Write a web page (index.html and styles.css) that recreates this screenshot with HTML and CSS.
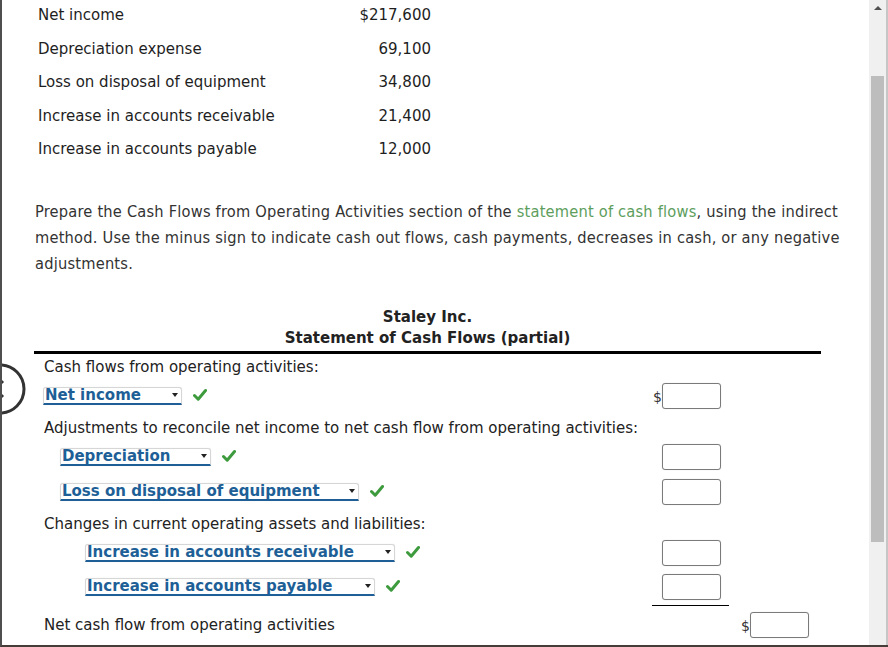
FILE: index.html
```html
<!DOCTYPE html>
<html>
<head>
<meta charset="utf-8">
<link rel="stylesheet" href="styles.css">
</head>
<body>
<div class="frame">
  <main class="content">
    <div class="given">
      <div class="given-row"><span>Net income</span><span>$217,600</span></div>
      <div class="given-row"><span>Depreciation expense</span><span>69,100</span></div>
      <div class="given-row"><span>Loss on disposal of equipment</span><span>34,800</span></div>
      <div class="given-row"><span>Increase in accounts receivable</span><span>21,400</span></div>
      <div class="given-row"><span>Increase in accounts payable</span><span>12,000</span></div>
    </div>

    <p class="instructions">Prepare the Cash Flows from Operating Activities section of the <span class="term">statement of cash flows</span>, using the indirect method. Use the minus sign to indicate cash out flows, cash payments, decreases in cash, or any negative adjustments.</p>

    <section class="statement">
      <header class="st-head">
        <div>Staley Inc.</div>
        <div>Statement of Cash Flows (partial)</div>
      </header>

      <div class="row r-cf">
        <div class="label">Cash flows from operating activities:</div>
      </div>
      <div class="row r-ni">
        <div class="label">
          <span class="pick w-ni">Net income<i class="arrow"></i></span>
          <svg class="check" viewBox="0 0 14 14"><path d="M1.5 7.5 L5.2 11.2 L12.5 2.5"/></svg>
        </div>
        <div class="cell c1"><span class="dollar">$</span><span class="box"></span></div>
        <div class="cell c2"></div>
      </div>
      <div class="row r-adj">
        <div class="label">Adjustments to reconcile net income to net cash flow from operating activities:</div>
      </div>
      <div class="row r-dep">
        <div class="label ind1">
          <span class="pick w-dep">Depreciation<i class="arrow"></i></span>
          <svg class="check" viewBox="0 0 14 14"><path d="M1.5 7.5 L5.2 11.2 L12.5 2.5"/></svg>
        </div>
        <div class="cell c1"><span class="box"></span></div>
        <div class="cell c2"></div>
      </div>
      <div class="row r-loss">
        <div class="label ind1">
          <span class="pick w-loss">Loss on disposal of equipment<i class="arrow"></i></span>
          <svg class="check" viewBox="0 0 14 14"><path d="M1.5 7.5 L5.2 11.2 L12.5 2.5"/></svg>
        </div>
        <div class="cell c1"><span class="box"></span></div>
        <div class="cell c2"></div>
      </div>
      <div class="row r-chg">
        <div class="label">Changes in current operating assets and liabilities:</div>
      </div>
      <div class="row r-ar">
        <div class="label ind2">
          <span class="pick w-ar">Increase in accounts receivable<i class="arrow"></i></span>
          <svg class="check" viewBox="0 0 14 14"><path d="M1.5 7.5 L5.2 11.2 L12.5 2.5"/></svg>
        </div>
        <div class="cell c1"><span class="box"></span></div>
        <div class="cell c2"></div>
      </div>
      <div class="row r-ap">
        <div class="label ind2">
          <span class="pick w-ap">Increase in accounts payable<i class="arrow"></i></span>
          <svg class="check" viewBox="0 0 14 14"><path d="M1.5 7.5 L5.2 11.2 L12.5 2.5"/></svg>
        </div>
        <div class="cell c1 total-line"><span class="box"></span></div>
        <div class="cell c2"></div>
      </div>
      <div class="row r-net">
        <div class="label">Net cash flow from operating activities</div>
        <div class="cell c1"></div>
        <div class="cell c2"><span class="dollar">$</span><span class="box"></span></div>
      </div>
    </section>

    <svg class="nav-btn" viewBox="0 0 52 56"><circle cx="26" cy="28" r="24"/><path d="M29 20 L21 28 L29 36"/></svg>
  </main>

  <aside class="scrollbar">
    <div class="sb-up"></div>
    <div class="sb-thumb"></div>
  </aside>
</div>
</body>
</html>
```

FILE: styles.css
```css
html, body {
  margin: 0;
  padding: 0;
  background: #fff;
}

body {
  width: 888px;
  height: 647px;
  overflow: hidden;
  font-family: "DejaVu Sans", Verdana, sans-serif;
  font-size: 15px;
  color: #1e1e1e;
}

.frame {
  display: flex;
  height: 645px;
  border-left: 2px solid #4f4f4f;
  border-bottom: 2px solid #463d39;
}

.content {
  flex: 1;
  position: relative;
  overflow: hidden;
}

/* given data table */
.given {
  margin: -1.5px 0 0 36px;
  width: 393px;
}

.given-row {
  display: flex;
  justify-content: space-between;
  align-items: center;
  height: 33.5px;
}

/* instructions */
.instructions {
  margin: 33px 0 0 33px;
  width: 814px;
  font-family: "DejaVu Sans Condensed", "Liberation Sans Narrow", sans-serif;
  font-size: 16.3px;
  letter-spacing: 0.2px;
  line-height: 26px;
  color: #333;
}

.term {
  color: #5d9e5d;
}

/* statement */
.statement {
  margin: 30px 0 0 32px;
  width: 787px;
}

.st-head {
  text-align: center;
  font-weight: bold;
  line-height: 21px;
  color: #222;
  padding-bottom: 2px;
  border-bottom: 3px solid #000;
}

.row {
  display: flex;
  align-items: center;
  height: 26px;
  padding-left: 10px;
  color: #222;
}

.r-ni { margin-top: 3px; }
.r-adj { margin-top: 6px; }
.r-dep { margin-top: 3px; }
.r-loss { margin-top: 9px; }
.r-chg { margin-top: 6px; }
.r-ar { margin-top: 3px; }
.r-ap { margin-top: 8px; }
.r-net { margin-top: 6px; }

.r-ap {
  align-items: flex-start;
  height: 32px;
}
.r-ap .label { height: 26px; }

.label {
  flex: 1;
  display: flex;
  align-items: center;
  min-width: 0;
  white-space: nowrap;
}

.ind1 { padding-left: 17px; }
.ind2 { padding-left: 42px; }

.pick {
  position: relative;
  box-sizing: border-box;
  height: 18px;
  margin-left: -1px;
  padding: 0 0 0 1px;
  border: 1px solid #d6d6d6;
  border-bottom: 2px solid #1d5f96;
  border-radius: 3px 3px 0 0;
  font-weight: bold;
  color: #1d5f96;
  line-height: 15px;
  box-shadow: 0 0 1px rgba(0,0,0,0.15);
}

.w-ni { width: 139px; }
.w-dep { width: 151px; }
.w-loss { width: 299px; }
.w-ar { width: 310px; }
.w-ap { width: 290px; }

.arrow {
  position: absolute;
  right: 3px;
  top: 5px;
  width: 0;
  height: 0;
  border-left: 3.5px solid transparent;
  border-right: 3.5px solid transparent;
  border-top: 4px solid #222;
}

.check {
  width: 14px;
  height: 14px;
  margin-left: 11px;
  margin-top: -2px;
  fill: none;
  stroke: #3d9a3d;
  stroke-width: 3;
  stroke-linecap: round;
  stroke-linejoin: round;
}

.cell {
  display: flex;
  align-items: center;
  justify-content: flex-end;
  box-sizing: border-box;
  height: 26px;
}

.c1 {
  width: 77px;
  padding-right: 8px;
}

.c2 {
  width: 92px;
  padding-right: 12px;
}

.total-line {
  box-sizing: content-box;
  width: 69px;
  padding-bottom: 5px;
  border-bottom: 1px solid #000;
}

.dollar {
  color: #333;
  font-family: "DejaVu Sans", sans-serif;
  font-size: 14px;
  line-height: 14px;
  margin-top: 2px;
}

.box {
  box-sizing: border-box;
  width: 59px;
  height: 26px;
  border: 1px solid #7a7a7a;
  border-radius: 3px;
  background: #fff;
  box-shadow: 0 0 1px rgba(0,0,0,0.2);
}

.nav-btn {
  position: absolute;
  left: -28px;
  top: 361px;
  width: 52px;
  height: 56px;
  fill: #fff;
  stroke: #333;
  stroke-width: 3;
}

/* fake scrollbar */
.scrollbar {
  position: relative;
  width: 17px;
  background: #f0f0f0;
  border-right: 2px solid #c6c6c6;
}

.sb-up {
  margin: 6px auto 0;
  width: 0;
  height: 0;
  border-left: 4px solid transparent;
  border-right: 4px solid transparent;
  border-bottom: 4px solid #505050;
}

.sb-thumb {
  margin: 66px auto 0;
  width: 13px;
  height: 466px;
  background: #bdbdbd;
}
```
